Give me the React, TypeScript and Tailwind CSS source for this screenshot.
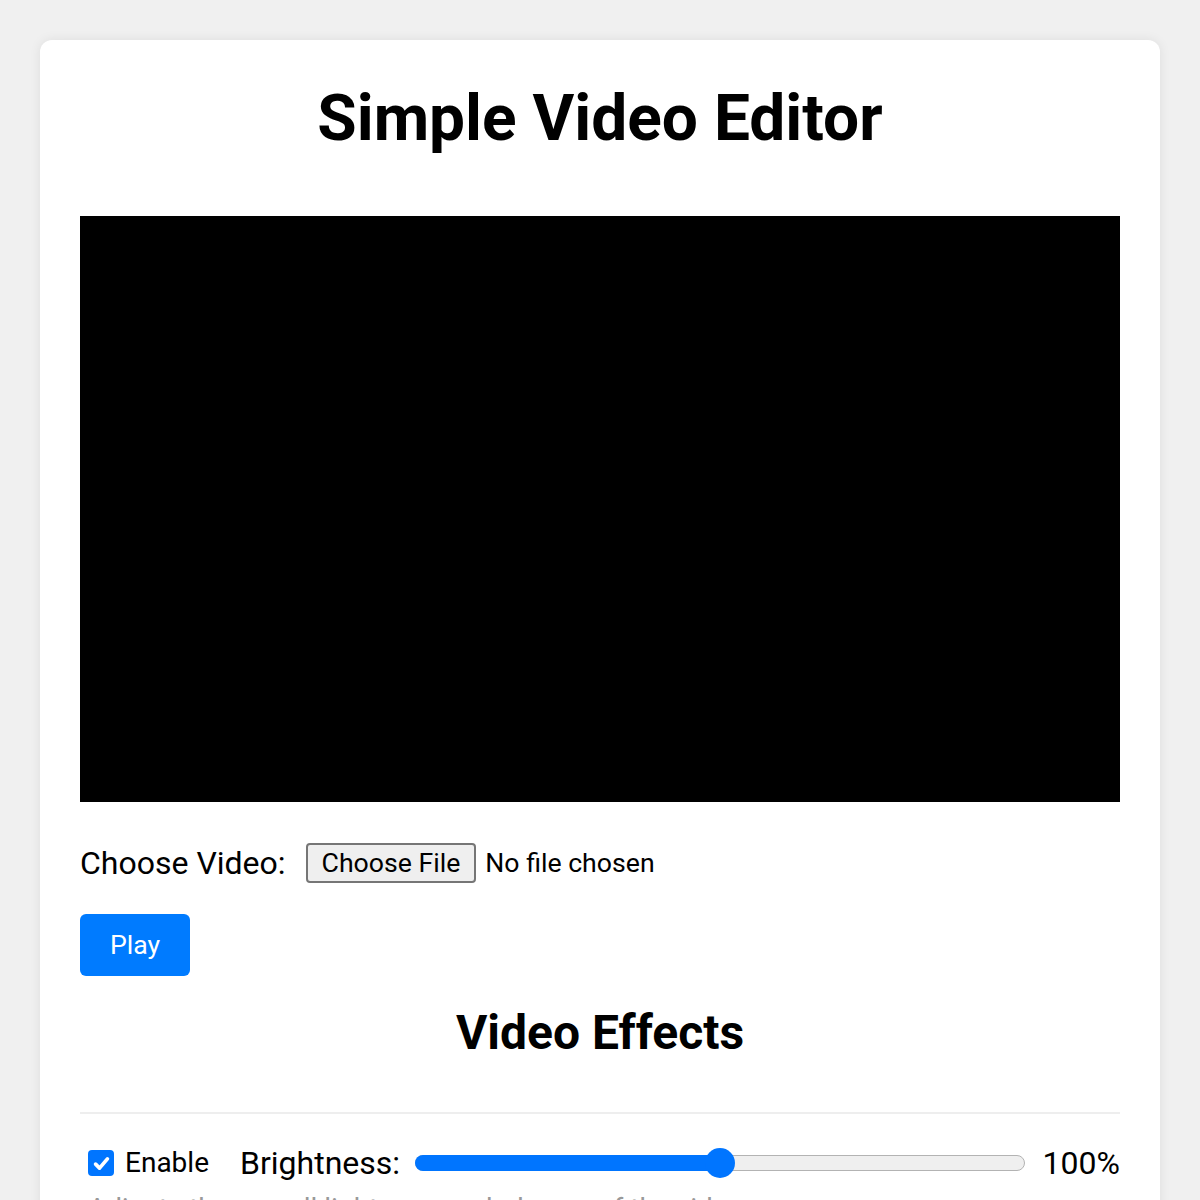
import React from "react";

const CheckBox = () => (
  <span className="flex h-[26px] w-[26px] items-center justify-center rounded-[4px] bg-[#0075ff]">
    <svg viewBox="0 0 16 16" className="h-[21px] w-[21px]" fill="none">
      <path d="M3.5 8.5l3 3 6-7" stroke="white" strokeWidth={2.8} strokeLinecap="round" strokeLinejoin="round" />
    </svg>
  </span>
);

const Slider = ({ value }: { value: number }) => (
  <div className="relative flex h-[30px] flex-1 items-center">
    <div className="h-[16px] w-full rounded-full border border-[#b3b3b3] bg-[#efefef]" />
    <div
      className="absolute left-0 top-1/2 h-[16px] -translate-y-1/2 rounded-full bg-[#0075ff]"
      style={{ width: `${value}%` }}
    />
    <div
      className="absolute top-1/2 h-[30px] w-[30px] -translate-x-1/2 -translate-y-1/2 rounded-full bg-[#0075ff]"
      style={{ left: `${value}%` }}
    />
  </div>
);

export default function App() {
  return (
    <div className="min-h-[1200px] bg-[#f0f0f0] px-10 pt-10 font-['Roboto',sans-serif] text-black">
      <div className="rounded-xl bg-white px-10 pt-10 pb-10 shadow-[0_0_12px_rgba(0,0,0,0.08)]">
        <h1 className="text-center text-[64px] font-bold leading-[77px]">Simple Video Editor</h1>

        {/* video preview */}
        <div className="mt-[59px] h-[586px] w-full bg-black" />

        <div className="mt-[41px] flex h-[40px] items-center">
          <span className="text-[32px]">Choose Video:</span>
          <span className="ml-[20px] flex h-[40px] items-center rounded-[4px] border-2 border-[#767676] bg-[#efefef] px-[14px] text-[26.67px]">
            Choose File
          </span>
          <span className="ml-[9px] text-[26.67px]">No file chosen</span>
        </div>

        <button className="mt-[31px] flex h-[62px] w-[110px] items-center justify-center rounded-[6px] bg-[#007bff] text-[26.67px] text-white">
          Play
        </button>

        <h2 className="mt-[29px] text-center text-[48px] font-bold leading-[56px]">Video Effects</h2>

        <div className="mt-[51px] border-t-2 border-[#eeeeee]" />

        {/* effect row */}
        <div className="mt-[25px] flex items-center">
          <span className="ml-[8px]">
            <CheckBox />
          </span>
          <span className="ml-[11px] text-[28px]">Enable</span>
          <span className="ml-[31px] text-[32px]">Brightness:</span>
          <div className="ml-[15px] mr-[18px] flex flex-1">
            <Slider value={50} />
          </div>
          <span className="text-[32px]">100%</span>
        </div>

        <p className="mt-[1px] px-[8px] text-[28px] text-[#999]">
          Adjusts the overall lightness or darkness of the video.
        </p>
      </div>
    </div>
  );
}
